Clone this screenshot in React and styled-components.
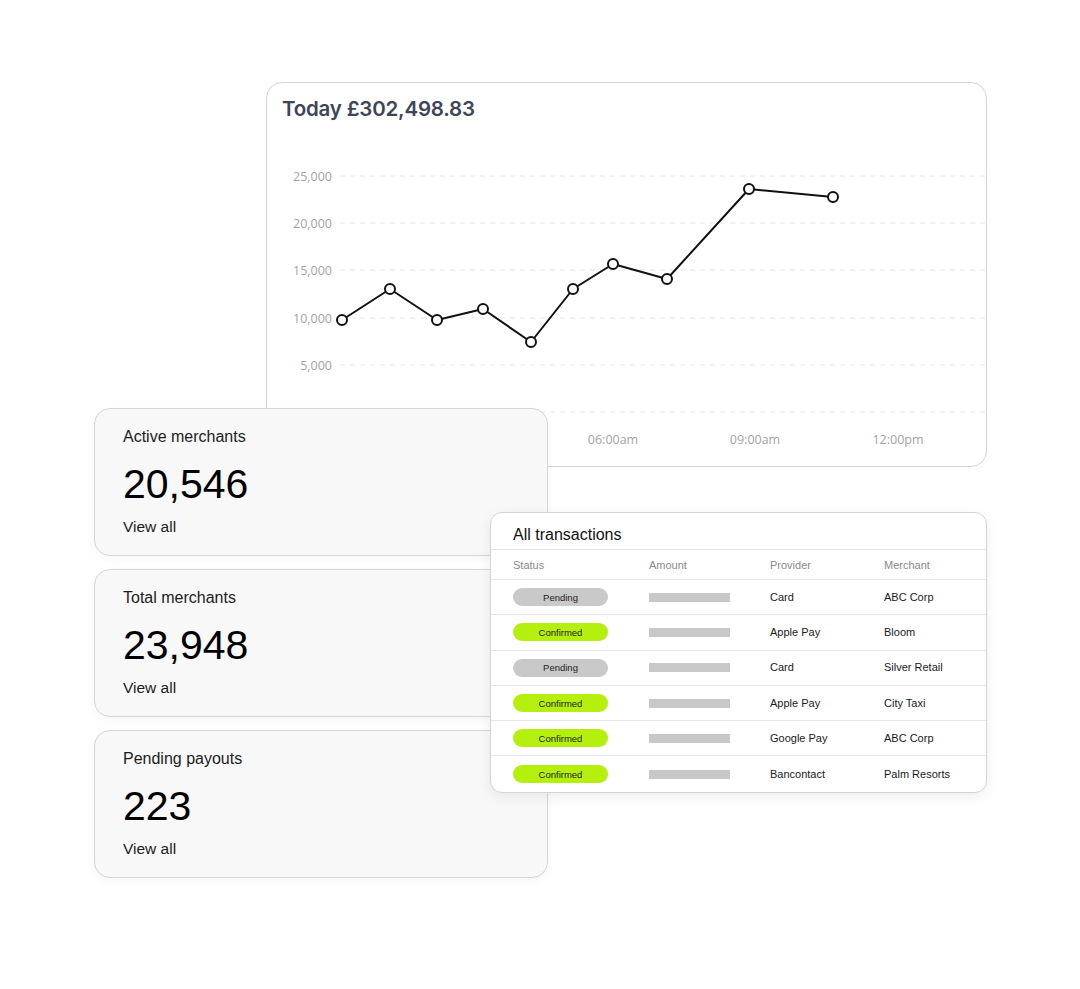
import React from "react";
import styled, { createGlobalStyle } from "styled-components";

const GlobalStyle = createGlobalStyle`
  html, body {
    margin: 0;
    padding: 0;
    background: #ffffff;
  }
  body {
    font-family: "Liberation Sans", Arial, sans-serif;
    color: #111;
  }
`;

const Canvas = styled.div`
  position: relative;
  width: 1080px;
  height: 989px;
  overflow: hidden;
  background: #fff;
`;

const ChartCard = styled.section`
  position: absolute;
  left: 266px;
  top: 82px;
  width: 721px;
  height: 385px;
  box-sizing: border-box;
  border: 1px solid #d4d4d4;
  border-radius: 16px;
  background: #fff;
  display: flex;
  flex-direction: column;
  overflow: hidden;
`;

const ChartTitle = styled.h1`
  margin: 0;
  height: 60px;
  box-sizing: border-box;
  padding: 13px 0 0 15px;
  font-family: Inter, "Noto Sans", sans-serif;
  font-weight: 600;
  font-size: 20.5px;
  letter-spacing: -0.2px;
  color: #3d4657;
`;

const StatStack = styled.div`
  position: absolute;
  left: 94px;
  top: 408px;
  width: 454px;
  display: flex;
  flex-direction: column;
  gap: 13px;
`;

const StatCard = styled.div`
  height: 148px;
  box-sizing: border-box;
  padding: 18px 28px 0;
  background: #f8f8f8;
  border: 1px solid #d5d5d5;
  border-radius: 16px;
  box-shadow: 0 3px 10px rgba(0, 0, 0, 0.04);
  display: flex;
  flex-direction: column;
`;

const StatLabel = styled.div`
  font-size: 16px;
  line-height: 19px;
  color: #1c1c1c;
`;

const StatValue = styled.div`
  margin-top: 17px;
  font-size: 41px;
  line-height: 42px;
  color: #000;
`;

const StatLink = styled.div`
  margin-top: 12px;
  font-size: 15.5px;
  line-height: 19px;
  color: #1c1c1c;
`;

const TxCard = styled.section`
  position: absolute;
  left: 490px;
  top: 512px;
  width: 497px;
  box-sizing: border-box;
  background: #fff;
  border: 1px solid #d4d4d4;
  border-radius: 12px;
  box-shadow: 0 4px 14px rgba(0, 0, 0, 0.07);
  overflow: hidden;
`;

const TxTitle = styled.h2`
  margin: 0;
  height: 37px;
  box-sizing: border-box;
  padding: 13px 0 0 22px;
  font-size: 16px;
  font-weight: 400;
  line-height: 18px;
  color: #111;
  border-bottom: 1px solid #e4e4e4;
`;

const Row = styled.div`
  display: grid;
  grid-template-columns: 136px 121px 114px 1fr;
  align-items: center;
  padding-left: 22px;
  box-sizing: border-box;
  height: ${(p) => (p.$head ? "30px" : "35.3px")};
  border-bottom: 1px solid #e6e6e6;
  font-size: 11px;
  color: ${(p) => (p.$head ? "#8a8a8a" : "#1a1a1a")};

  &:last-child {
    border-bottom: none;
  }
`;

const Pill = styled.span`
  display: flex;
  align-items: center;
  justify-content: center;
  width: 95px;
  height: 18px;
  border-radius: 9px;
  font-size: 9.5px;
  color: #222;
  background: ${(p) => (p.$ok ? "#b5ef0d" : "#c9c9c9")};
`;

const AmountBar = styled.span`
  display: block;
  width: 81px;
  height: 9px;
  background: #c8c8c8;
`;

const Cell = styled.span`
  margin-top: -1px;
`;

const gridY = [
  { y: 33, label: "25,000" },
  { y: 80, label: "20,000" },
  { y: 127, label: "15,000" },
  { y: 175, label: "10,000" },
  { y: 222, label: "5,000" },
  { y: 269, label: "" },
];

const xLabels = [
  { x: 62, label: "00:00am" },
  { x: 204, label: "03:00am" },
  { x: 346, label: "06:00am" },
  { x: 488, label: "09:00am" },
  { x: 631, label: "12:00pm" },
];

const points = [
  [75, 177],
  [123, 146],
  [170, 177],
  [216, 166],
  [264, 199],
  [306, 146],
  [346, 121],
  [400, 136],
  [482, 46],
  [566, 54],
];

function Chart() {
  const path = points.map((p, i) => `${i ? "L" : "M"}${p[0]} ${p[1]}`).join(" ");
  return (
    <svg width="719" height="323" viewBox="0 0 719 323">
      {gridY.map((g) => (
        <g key={g.y}>
          <line
            x1="73"
            x2="719"
            y1={g.y}
            y2={g.y}
            stroke="#e6e6e6"
            strokeWidth="1"
            strokeDasharray="5 5"
          />
          {g.label && (
            <text
              x="65"
              y={g.y + 4.5}
              textAnchor="end"
              fontFamily="'Open Sans', sans-serif"
              fontSize="12.5"
              fill="#a3a3a3"
            >
              {g.label}
            </text>
          )}
        </g>
      ))}
      {xLabels.map((l) => (
        <text
          key={l.label}
          x={l.x}
          y="301"
          textAnchor="middle"
          fontFamily="'Open Sans', sans-serif"
          fontSize="12.5"
          fill="#a3a3a3"
        >
          {l.label}
        </text>
      ))}
      <path d={path} fill="none" stroke="#111" strokeWidth="2" strokeLinejoin="round" />
      {points.map((p, i) => (
        <circle key={i} cx={p[0]} cy={p[1]} r="5" fill="#fff" stroke="#111" strokeWidth="2" />
      ))}
    </svg>
  );
}

const stats = [
  { label: "Active merchants", value: "20,546" },
  { label: "Total merchants", value: "23,948" },
  { label: "Pending payouts", value: "223" },
];

const transactions = [
  { ok: false, provider: "Card", merchant: "ABC Corp" },
  { ok: true, provider: "Apple Pay", merchant: "Bloom" },
  { ok: false, provider: "Card", merchant: "Silver Retail" },
  { ok: true, provider: "Apple Pay", merchant: "City Taxi" },
  { ok: true, provider: "Google Pay", merchant: "ABC Corp" },
  { ok: true, provider: "Bancontact", merchant: "Palm Resorts" },
];

export default function App() {
  return (
    <>
      <GlobalStyle />
      <Canvas>
        <ChartCard>
          <ChartTitle>Today £302,498.83</ChartTitle>
          <Chart />
        </ChartCard>

        <StatStack>
          {stats.map((s) => (
            <StatCard key={s.label}>
              <StatLabel>{s.label}</StatLabel>
              <StatValue>{s.value}</StatValue>
              <StatLink>View all</StatLink>
            </StatCard>
          ))}
        </StatStack>

        <TxCard>
          <TxTitle>All transactions</TxTitle>
          <Row $head>
            <span>Status</span>
            <span>Amount</span>
            <span>Provider</span>
            <span>Merchant</span>
          </Row>
          {transactions.map((t, i) => (
            <Row key={i}>
              <Pill $ok={t.ok}>{t.ok ? "Confirmed" : "Pending"}</Pill>
              <AmountBar />
              <Cell>{t.provider}</Cell>
              <Cell>{t.merchant}</Cell>
            </Row>
          ))}
        </TxCard>
      </Canvas>
    </>
  );
}
